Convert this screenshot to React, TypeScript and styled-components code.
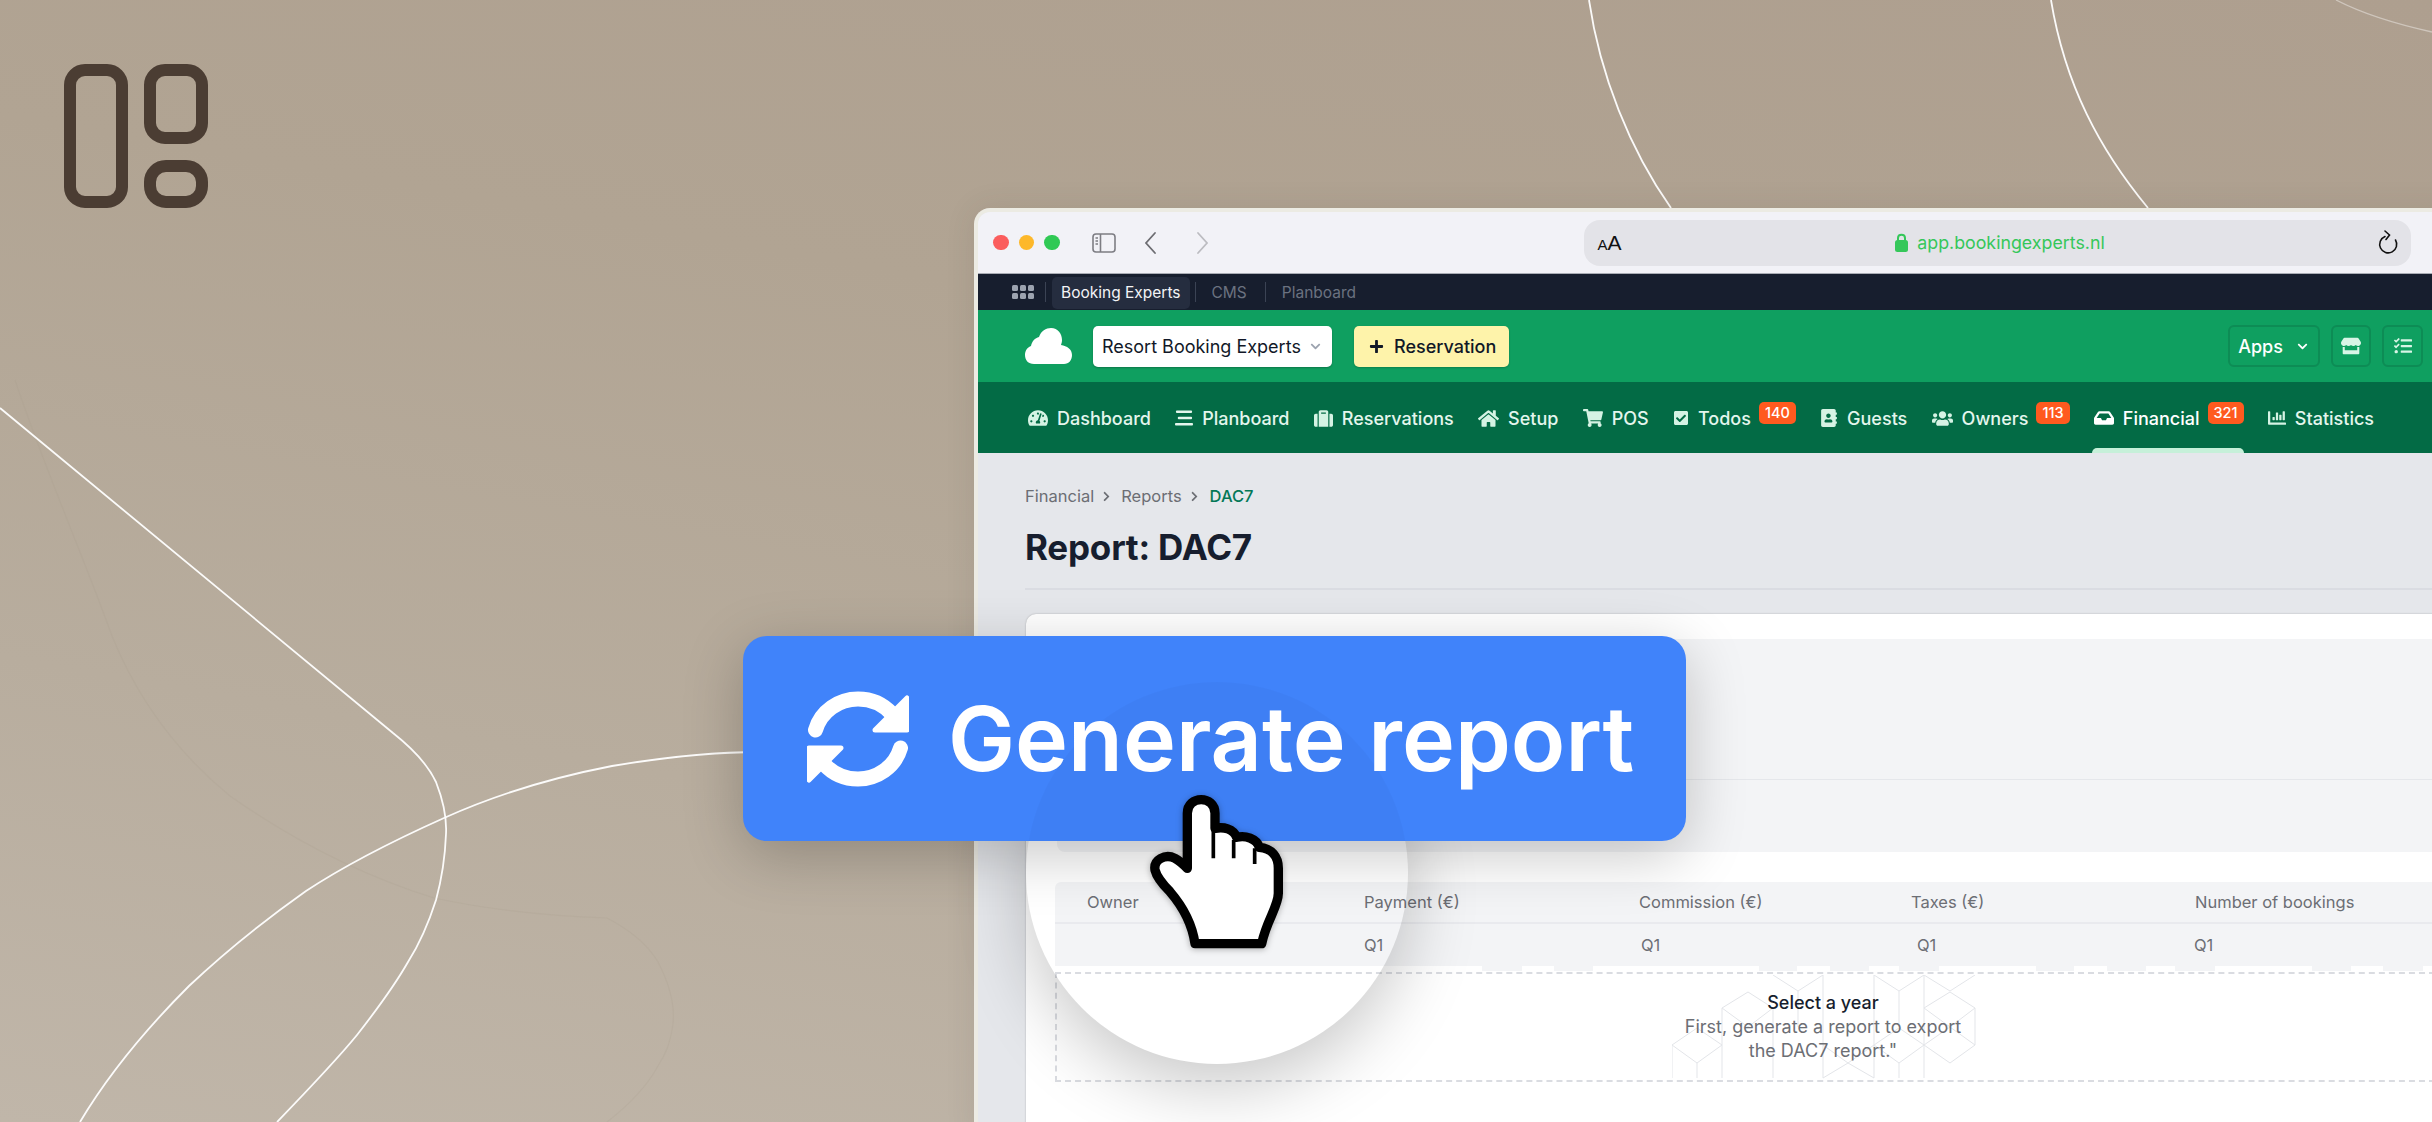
import React from "react";
import styled, { createGlobalStyle } from "styled-components";
import {
  FaTachometerAlt, FaSuitcase, FaHome, FaShoppingCart, FaCheckSquare, FaAddressBook,
  FaUsers, FaInbox, FaChartBar, FaStore, FaTasks, FaPlus, FaChevronDown, FaChevronRight,
} from "react-icons/fa";

const Global = createGlobalStyle`
  html, body { margin: 0; padding: 0; background: #b1a493; }
  body { font-family: Inter, "Liberation Sans", sans-serif; }
`;

const Stage = styled.div`
  position: relative;
  width: 2432px;
  height: 1122px;
  overflow: hidden;
  padding: 64px 0 0 64px;
  box-sizing: border-box;
  background: linear-gradient(10deg, #c0b6a9 0%, #b8ad9e 30%, #b1a493 65%, #ae9f8f 100%);
`;
const Lines = styled.svg`
  position: absolute;
  inset: 0;
`;
const Logo = styled.svg`
  display: block;
  position: relative;
`;
const Window = styled.div`
  position: relative;
  margin-left: 910px;
  width: 1500px;
  height: 930px;
  box-sizing: border-box;
  border: 4px solid #ecebe3;
  border-bottom: 0;
  border-right: 0;
  border-radius: 16px 0 0 0;
  background: #e5e7eb;
  box-shadow: 0 0 30px rgba(60, 50, 40, 0.1);
  overflow: hidden;
`;
const TitleBar = styled.div`
  height: 62px;
  background: #f2f2f7;
  display: flex;
  align-items: center;
  padding-left: 15px;
  border-bottom: 1px solid #a9acb4;
  box-sizing: border-box;
`;
const Lights = styled.div`
  display: flex;
  gap: 10px;
  margin-right: 32px;
`;
const Light = styled.span<{ $c: string }>`
  width: 15.5px;
  height: 15.5px;
  border-radius: 50%;
  background: ${(p) => p.$c};
`;
const ToolIcon = styled.svg<{ $ml: number }>`
  display: block;
  margin-left: ${(p) => p.$ml}px;
  flex: none;
`;
const Address = styled.div`
  margin-left: 375px;
  width: 827px;
  height: 46px;
  border-radius: 16px;
  background: #e3e3e8;
  display: grid;
  grid-template-columns: 60px 1fr 60px;
  align-items: center;
  color: #111;
`;
const AaWrap = styled.div`
  padding-left: 14px;
  display: flex;
  align-items: baseline;
  font-family: "Liberation Sans", sans-serif;
`;
const SmallA = styled.span`font-size: 15px;`;
const BigA = styled.span`font-size: 21px;`;
const Url = styled.div`
  display: flex;
  align-items: center;
  justify-content: center;
  gap: 9px;
  padding-left: 6px;
  color: #35c75a;
  font-size: 17.8px;
`;
const Reload = styled.div`
  display: flex;
  justify-content: flex-end;
  padding-right: 12px;
`;

const AppBar = styled.div`
  height: 36px;
  background: #171e2e;
  display: flex;
  align-items: center;
  padding-left: 34px;
  font-size: 15.5px;
`;
const GridDots = styled.div`
  display: grid;
  grid-template-columns: repeat(3, 6px);
  grid-auto-rows: 6px;
  gap: 2px 2px;
  margin-right: 11px;
`;
const Dot = styled.span`
  border-radius: 1.5px;
  background: #9ca3af;
`;
const Sep = styled.span`
  width: 1px;
  height: 20px;
  background: #3b4354;
  flex: none;
`;
const AppTab = styled.div<{ $active?: boolean }>`
  height: 32px;
  margin-top: 3px;
  padding-bottom: 2px;
  box-sizing: border-box;
  align-self: flex-start;
  display: flex;
  align-items: center;
  border-radius: 5px;
  padding-left: ${(p) => (p.$active ? "9px" : "16px")};
  padding-right: ${(p) => (p.$active ? "9px" : "18px")};
  margin-left: ${(p) => (p.$active ? "6px" : "0")};
  margin-right: ${(p) => (p.$active ? "5px" : "0")};
  background: ${(p) => (p.$active ? "#252d3f" : "transparent")};
  color: ${(p) => (p.$active ? "#f3f4f6" : "#6b7280")};
`;

const TopBar = styled.div`
  height: 72px;
  background: #0f9f60;
  display: flex;
  align-items: center;
  padding-left: 47px;
`;
const Select = styled.div`
  margin-left: 21px;
  width: 239px;
  height: 41px;
  box-sizing: border-box;
  background: #fff;
  border-radius: 5px;
  box-shadow: 0 1px 2px rgba(0, 0, 0, 0.25);
  display: flex;
  align-items: center;
  justify-content: space-between;
  padding: 0 11px 0 9px;
  font-size: 18px;
  color: #111827;
  svg { color: #9ca3af; }
`;
const ReserveBtn = styled.div`
  margin-left: 22px;
  width: 155px;
  height: 41px;
  box-sizing: border-box;
  background: #fef3aa;
  border-radius: 5px;
  box-shadow: 0 1px 2px rgba(0, 0, 0, 0.2);
  display: flex;
  align-items: center;
  gap: 10px;
  padding-left: 15px;
  font-size: 18px;
  font-weight: 500;
  color: #111827;
`;
const TopRight = styled.div`
  margin-left: 719px;
  display: flex;
  gap: 11px;
`;
const GhostBtn = styled.div<{ $w: number; $pr?: number }>`
  width: ${(p) => p.$w}px;
  height: 42px;
  box-sizing: border-box;
  border: 2px solid #0d8c55;
  border-radius: 6px;
  display: flex;
  align-items: center;
  justify-content: center;
  gap: 14px;
  padding-right: ${(p) => p.$pr ?? 0}px;
  color: #d8f5e6;
  font-size: 18px;
  font-weight: 500;
`;
const AppsLabel = styled.span`color: #fff;`;

const Nav = styled.div`
  height: 71px;
  background: #036b45;
  display: flex;
  padding-left: 50px;
  gap: 24.3px;
`;
const NavItem = styled.div<{ $active?: boolean }>`
  position: relative;
  display: flex;
  align-items: center;
  gap: 9px;
  padding-top: 1px;
  font-size: 18px;
  font-weight: 500;
  color: ${(p) => (p.$active ? "#ffffff" : "#e4f6ed")};
  svg { color: ${(p) => (p.$active ? "#ffffff" : "#d5f3e4")}; flex: none; }
  ${(p) =>
    p.$active
      ? `&::after { content: ""; position: absolute; left: -2px; right: 0; bottom: 0; height: 5px; border-radius: 5px 5px 0 0; background: #c6f0d9; }`
      : ""}
`;
const Badge = styled.span`
  background: #ff5a1f;
  color: #fff;
  font-size: 14.5px;
  line-height: 22px;
  height: 22px;
  padding: 0 6px;
  border-radius: 5px;
  margin-bottom: 10px;
  margin-left: -1px;
`;

const Content = styled.div`
  padding: 31px 0 0 47px;
`;
const Crumbs = styled.div`
  display: flex;
  align-items: center;
  gap: 7px;
  height: 24px;
  font-size: 16.5px;
  color: #6c6e74;
  svg { color: #6c6e74; margin-right: 2px; }
`;
const CrumbNow = styled.span`
  color: #047857;
  font-weight: 500;
  margin-left: 1px;
`;
const Title = styled.h1`
  margin: 15px 0 0;
  font-size: 35px;
  line-height: 48px;
  font-weight: 700;
  letter-spacing: -0.2px;
  color: #171e2e;
`;
const Divider = styled.div`
  margin-top: 17px;
  height: 2px;
  background: #dadce2;
`;
const Card = styled.div`
  margin: 24px 0 0 1px;
  background: #fff;
  border-radius: 10px 0 0 0;
  box-shadow: 0 0 2px rgba(0, 0, 0, 0.25);
  padding: 25px 0 0 31px;
  height: 520px;
`;
const Panel = styled.div`
  height: 213px;
  background: #f3f4f6;
  border-radius: 8px 0 0 8px;
  box-sizing: border-box;
  padding-top: 140px;
`;
const PanelLine = styled.div`
  height: 1px;
  background: #e5e7eb;
`;
const TableWrap = styled.div`
  margin: 30px 0 0 -2px;
`;
const Row = styled.div<{ $cols: string; $h: number }>`
  display: grid;
  grid-template-columns: ${(p) => p.$cols};
  height: ${(p) => p.$h}px;
  box-sizing: border-box;
  align-items: center;
  background: #f3f4f6;
  padding-left: 32px;
  font-size: 16.5px;
  color: #6c6e74;
`;
const HeadRow = styled(Row)`
  border-radius: 6px 0 0 0;
  border-bottom: 2px solid #e9eaee;
`;
const Strip = styled.div`
  display: flex;
  height: 5px;
  background: #f3f4f6;
`;
const StripCut = styled.span<{ $w: number; $ml: number }>`
  width: ${(p) => p.$w}px;
  margin-left: ${(p) => p.$ml}px;
  flex: none;
  background: #fff;
`;
const EmptyBox = styled.div`
  position: relative;
  margin-top: 1px;
  height: 110px;
  box-sizing: border-box;
  border: 2px dashed #dadce1;
  border-right: 0;
  display: flex;
  flex-direction: column;
  align-items: center;
  justify-content: flex-start;
  padding: 17px 0 0 154px;
  text-align: center;
  font-size: 18px;
  line-height: 24px;
  color: #6c6e74;
  width: 1380px;
`;
const Hex = styled.svg`
  position: absolute;
  left: 615px;
  top: 1px;
`;
const EmptyTitle = styled.div`
  position: relative;
  color: #171e2e;
  font-weight: 500;
  font-size: 18px;
`;
const EmptyText = styled.div`
  position: relative;
  width: 300px;
`;

const Spotlight = styled.div`
  position: absolute;
  left: 1026px;
  top: 682px;
  width: 382px;
  height: 382px;
  border-radius: 50%;
  box-shadow: 0 22px 70px rgba(0, 0, 0, 0.22);
`;
const CTA = styled.div`
  position: absolute;
  left: 743px;
  top: 636px;
  width: 943px;
  height: 205px;
  box-sizing: border-box;
  padding-left: 64px;
  border-radius: 24px;
  background: #4083fa;
  box-shadow: 0 14px 60px rgba(0, 0, 0, 0.22);
  display: flex;
  align-items: center;
  gap: 39px;
  overflow: hidden;
  color: #fff;
  font-size: 89.6px;
  font-weight: 600;
  svg { position: relative; flex: none; }
`;
const CTATint = styled.div`
  position: absolute;
  left: 283px;
  top: 46px;
  width: 382px;
  height: 382px;
  border-radius: 50%;
  background: rgba(0, 0, 0, 0.025);
`;
const CTALabel = styled.span`
  position: relative;
  white-space: nowrap;
`;
const Hand = styled.svg`
  position: absolute;
  left: 1100px;
  top: 760px;
  filter: drop-shadow(0 1px 3px rgba(0, 0, 0, 0.3));
`;

const CloudIcon = () => (
  <svg width="47" height="36" viewBox="0 0 47 36">
    <path fill="#fff" d="M9 36C3 36 0 32 0 27C0 22 3 19 6 18C7 13 10 10 14 9C16 3 21 0 26 0C33 0 37 6 37 12C37 14 36.5 15.5 36 17C42 18 47 21 47 27C47 32 44 36 39 36Z" />
  </svg>
);

const BarsIcon = () => (
  <svg width="18" height="16" viewBox="0 0 19 16">
    <g fill="#e4f6ed">
      <rect x="1" y="0" width="17" height="2.6" rx="1" />
      <rect x="3" y="6.6" width="15" height="2.6" rx="1" />
      <rect x="0" y="13.2" width="19" height="2.6" rx="1" />
    </g>
  </svg>
);

const SyncHalf = () => (
  <>
    <path d="M8.5 39C14 20 32 8 51 8C64 8 76 13 85 23" fill="none" stroke="#fff" strokeWidth="15" strokeLinecap="round" />
    <path d="M100 7V39H68Z" fill="#fff" stroke="#fff" strokeWidth="5" strokeLinejoin="round" />
  </>
);
const SyncIcon = () => (
  <svg width="102" height="96" viewBox="0 0 102 96">
    <SyncHalf />
    <g transform="rotate(180 51 48)">
      <SyncHalf />
    </g>
  </svg>
);

const navItems: { label: string; icon: React.ReactNode; badge?: string; active?: boolean }[] = [
  { label: "Dashboard", icon: <FaTachometerAlt size={20} /> },
  { label: "Planboard", icon: <BarsIcon /> },
  { label: "Reservations", icon: <FaSuitcase size={19} /> },
  { label: "Setup", icon: <FaHome size={21} /> },
  { label: "POS", icon: <FaShoppingCart size={20} /> },
  { label: "Todos", icon: <FaCheckSquare size={16} />, badge: "140" },
  { label: "Guests", icon: <FaAddressBook size={18} /> },
  { label: "Owners", icon: <FaUsers size={21} />, badge: "113" },
  { label: "Financial", icon: <FaInbox size={20} />, badge: "321", active: true },
  { label: "Statistics", icon: <FaChartBar size={18} /> },
];

const headCols = "277px 275px 272px 284px 1fr";
const rowCols = "277px 277px 276px 277px 1fr";
const cuts: [number, number][] = [
  [427, 0], [32, 40], [166, 39], [33, 38], [30, 39], [97, 40], [33, 38], [29, 39], [97, 40], [32, 39], [60, 40],
];

export default function App() {
  return (
    <Stage>
      <Global />
      <Lines width="2432" height="1122" viewBox="0 0 2432 1122" fill="none">
        <path stroke="#a89a89" strokeOpacity="0.18" strokeWidth="1.2" d="M15 380C45 470 85 560 112 636C140 705 180 755 230 796C300 845 370 878 434 898C490 910 550 916 607 918C630 930 648 945 658 962C670 985 675 1005 673 1024C670 1045 665 1055 658 1066C645 1090 625 1108 607 1122" />
        <path stroke="#fff" strokeOpacity="0.95" strokeWidth="1.8" d="M0 408L393 733C412 748 428 765 436 782C443 800 447 816 446 834C445 860 442 878 436 900C428 925 420 943 408 962C392 990 375 1012 357 1035C335 1062 305 1093 277 1122" />
        <path stroke="#fff" strokeOpacity="0.95" strokeWidth="1.8" d="M760 752C710 752 660 758 612 766C550 778 495 795 444 818C395 840 350 862 306 891C265 920 225 952 189 986C145 1030 108 1075 80 1122" />
        <path stroke="#fff" strokeOpacity="0.95" strokeWidth="1.8" d="M1589 0C1600 75 1630 150 1671 208" />
        <path stroke="#fff" strokeOpacity="0.95" strokeWidth="1.8" d="M2051 0C2065 85 2100 150 2148 208" />
        <path stroke="#fff" strokeOpacity="0.4" strokeWidth="1.4" d="M2336 0C2365 15 2400 25 2432 32" />
      </Lines>
      <Logo width="144" height="144" viewBox="0 0 144 144" fill="none" stroke="#4b3d33" strokeWidth="12">
        <rect x="6" y="6" width="52" height="132" rx="15" />
        <rect x="86" y="6" width="52" height="68" rx="15" />
        <rect x="86" y="102" width="52" height="36" rx="16" />
      </Logo>
      <Window>
        <TitleBar>
          <Lights>
            <Light $c="#fb5d5d" />
            <Light $c="#fdb82a" />
            <Light $c="#30c955" />
          </Lights>
          <ToolIcon $ml={0} width="24" height="20" viewBox="0 0 24 20" fill="none" stroke="#7d7d83" strokeWidth="1.6">
            <rect x="1" y="1" width="22" height="18" rx="3" />
            <path d="M8.5 1V19M3.5 5H6M3.5 8H6M3.5 11H6" />
          </ToolIcon>
          <ToolIcon $ml={28} width="14" height="24" viewBox="0 0 14 24" fill="none" stroke="#6d6d72" strokeWidth="1.8" strokeLinecap="round">
            <path d="M11 2L2 12L11 22" />
          </ToolIcon>
          <ToolIcon $ml={37} width="14" height="24" viewBox="0 0 14 24" fill="none" stroke="#bcbcc1" strokeWidth="1.8" strokeLinecap="round">
            <path d="M3 2L12 12L3 22" />
          </ToolIcon>
          <Address>
            <AaWrap>
              <SmallA>A</SmallA>
              <BigA>A</BigA>
            </AaWrap>
            <Url>
              <svg width="13" height="19" viewBox="0 0 13 19">
                <path fill="none" stroke="#35c75a" strokeWidth="2" d="M3 8V5C3 0.5 10 0.5 10 5V8" />
                <rect x="0" y="7" width="13" height="12" rx="2.5" fill="#35c75a" />
              </svg>
              app.bookingexperts.nl
            </Url>
            <Reload>
              <svg width="22" height="26" viewBox="0 0 22 26" fill="none" stroke="#111" strokeWidth="1.6" strokeLinecap="round">
                <path d="M8 6.5A8.5 8.5 0 1 0 18.5 10" />
                <path d="M8 1L12.5 5L9 9.5" />
              </svg>
            </Reload>
          </Address>
        </TitleBar>
        <AppBar>
          <GridDots>
            {Array.from({ length: 6 }).map((_, i) => (
              <Dot key={i} />
            ))}
          </GridDots>
          <Sep />
          <AppTab $active>Booking Experts</AppTab>
          <Sep />
          <AppTab>CMS</AppTab>
          <Sep />
          <AppTab>Planboard</AppTab>
        </AppBar>
        <TopBar>
          <CloudIcon />
          <Select>
            Resort Booking Experts
            <FaChevronDown size={11} />
          </Select>
          <ReserveBtn>
            <FaPlus size={15} />
            Reservation
          </ReserveBtn>
          <TopRight>
            <GhostBtn $w={92} $pr={2}>
              <AppsLabel>Apps</AppsLabel>
              <FaChevronDown size={11} color="#fff" />
            </GhostBtn>
            <GhostBtn $w={40}>
              <FaStore size={20} />
            </GhostBtn>
            <GhostBtn $w={41}>
              <FaTasks size={18} />
            </GhostBtn>
          </TopRight>
        </TopBar>
        <Nav>
          {navItems.map((n) => (
            <NavItem key={n.label} $active={n.active}>
              {n.icon}
              {n.label}
              {n.badge ? <Badge>{n.badge}</Badge> : null}
            </NavItem>
          ))}
        </Nav>
        <Content>
          <Crumbs>
            Financial <FaChevronRight size={11} /> Reports <FaChevronRight size={11} /> <CrumbNow>DAC7</CrumbNow>
          </Crumbs>
          <Title>Report: DAC7</Title>
          <Divider />
          <Card>
            <Panel>
              <PanelLine />
            </Panel>
            <TableWrap>
              <HeadRow $cols={headCols} $h={42}>
                <span>Owner</span>
                <span>Payment (€)</span>
                <span>Commission (€)</span>
                <span>Taxes (€)</span>
                <span>Number of bookings</span>
              </HeadRow>
              <Row $cols={rowCols} $h={42}>
                <span />
                <span>Q1</span>
                <span>Q1</span>
                <span>Q1</span>
                <span>Q1</span>
              </Row>
              <Strip>
                {cuts.map(([w, ml], i) => (
                  <StripCut key={i} $w={w} $ml={ml} />
                ))}
              </Strip>
              <EmptyBox>
                <Hex width="304" height="105" viewBox="0 0 304 105" fill="none" stroke="#e3e5e9" strokeWidth="1">
                  <path d="M101 0L126 16L151 0M202 0L227 16L252 0M252 0L278 16L303 0" />
                  <path d="M76 17L50 33L76 52L101 33ZM278 17L252 33L278 52L303 33Z" />
                  <path d="M25 53L0 70L25 88L50 70ZM227 53L202 70L227 88L252 70ZM278 52L252 70L278 88L303 70Z" />
                  <path d="M151 103L176 88L202 103M151 70L176 88L202 70M0 70V103M25 88V103M50 33V103M101 33V103M126 16V52M151 0V103M202 0V103M227 16V52M227 88V103M252 0V103M303 33V70" />
                </Hex>
                <EmptyTitle>Select a year</EmptyTitle>
                <EmptyText>First, generate a report to export the DAC7 report."</EmptyText>
              </EmptyBox>
            </TableWrap>
          </Card>
        </Content>
      </Window>
      <Spotlight />
      <CTA>
        <CTATint />
        <SyncIcon />
        <CTALabel>Generate report</CTALabel>
      </CTA>
      <Hand width="220" height="200" viewBox="0 0 660 600">
        <path
          fill="#fff"
          stroke="#000"
          strokeWidth="28"
          strokeLinejoin="round"
          d="M262 325V160C262 105 345 105 345 160V205C370 200 400 205 410 232C435 225 470 235 478 262C515 265 535 290 535 325V400C535 440 500 480 485 551H285C275 480 240 430 210 395C190 375 170 350 165 330C160 300 195 280 225 295C240 303 252 315 262 325Z"
        />
        <path stroke="#000" strokeWidth="11" d="M340 210V295M401 240V295M464 265V312" />
      </Hand>
    </Stage>
  );
}
